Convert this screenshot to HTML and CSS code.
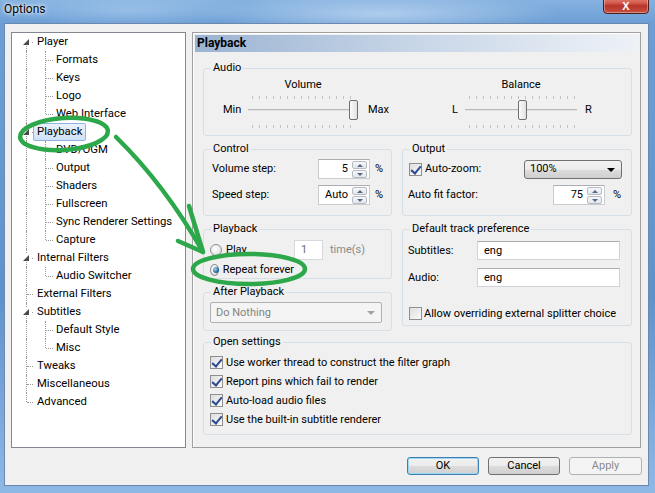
FILE: index.html
```html
<!DOCTYPE html>
<html lang="en">
<head>
    <meta charset="UTF-8">
    <title>Options</title>
    <link rel="stylesheet" href="styles.css">
</head>
<body>
<div class="window">
    <div class="titlebar">
        <span class="title">Options</span>
        <span class="close">X</span>
    </div>

    <div class="client">
        <div class="main">
            <!-- page tree -->
            <div class="tree">
                <div class="node"><i class="l0 first"></i><span class="exp"></span><span class="txt">Player</span></div>
                <div class="node"><i class="l0 pass"></i><i class="l1"></i><span class="txt">Formats</span></div>
                <div class="node"><i class="l0 pass"></i><i class="l1"></i><span class="txt">Keys</span></div>
                <div class="node"><i class="l0 pass"></i><i class="l1"></i><span class="txt">Logo</span></div>
                <div class="node"><i class="l0 pass"></i><i class="l1 last"></i><span class="txt">Web Interface</span></div>
                <div class="node"><i class="l0"></i><span class="exp"></span><span class="txt sel">Playback</span></div>
                <div class="node"><i class="l0 pass"></i><i class="l1"></i><span class="txt">DVD/OGM</span></div>
                <div class="node"><i class="l0 pass"></i><i class="l1"></i><span class="txt">Output</span></div>
                <div class="node"><i class="l0 pass"></i><i class="l1"></i><span class="txt">Shaders</span></div>
                <div class="node"><i class="l0 pass"></i><i class="l1"></i><span class="txt">Fullscreen</span></div>
                <div class="node"><i class="l0 pass"></i><i class="l1"></i><span class="txt">Sync Renderer Settings</span></div>
                <div class="node"><i class="l0 pass"></i><i class="l1 last"></i><span class="txt">Capture</span></div>
                <div class="node"><i class="l0"></i><span class="exp"></span><span class="txt">Internal Filters</span></div>
                <div class="node"><i class="l0 pass"></i><i class="l1 last"></i><span class="txt">Audio Switcher</span></div>
                <div class="node"><i class="l0"></i><span class="txt">External Filters</span></div>
                <div class="node"><i class="l0"></i><span class="exp"></span><span class="txt">Subtitles</span></div>
                <div class="node"><i class="l0 pass"></i><i class="l1"></i><span class="txt">Default Style</span></div>
                <div class="node"><i class="l0 pass"></i><i class="l1 last"></i><span class="txt">Misc</span></div>
                <div class="node"><i class="l0"></i><span class="txt">Tweaks</span></div>
                <div class="node"><i class="l0"></i><span class="txt">Miscellaneous</span></div>
                <div class="node"><i class="l0 last"></i><span class="txt">Advanced</span></div>
            </div>

            <!-- property page -->
            <div class="panel">
                <div class="panel-head">Playback</div>
                <div class="page">
                    <div class="group audio">
                        <span class="gtitle">Audio</span>
                        <div class="slider vol">
                            <span class="stitle">Volume</span>
                            <span class="smin">Min</span>
                            <div class="track"><span class="thumb" style="left:101px"></span></div>
                            <span class="smax">Max</span>
                        </div>
                        <div class="slider bal">
                            <span class="stitle">Balance</span>
                            <span class="smin">L</span>
                            <div class="track"><span class="thumb" style="left:53px"></span></div>
                            <span class="smax">R</span>
                        </div>
                    </div>

                    <div class="cols">
                        <div class="group control">
                            <span class="gtitle">Control</span>
                            <div class="field">
                                <span class="lbl">Volume step:</span>
                                <span class="spin"><span class="val">5</span><span class="arrows"><b class="up"></b><b class="dn"></b></span></span>
                                <span class="unit">%</span>
                            </div>
                            <div class="field">
                                <span class="lbl">Speed step:</span>
                                <span class="spin"><span class="val">Auto</span><span class="arrows"><b class="up"></b><b class="dn"></b></span></span>
                                <span class="unit">%</span>
                            </div>
                        </div>
                        <div class="group output">
                            <span class="gtitle">Output</span>
                            <div class="field">
                                <span class="lbl check"><span class="cb on"></span>Auto-zoom:</span>
                                <span class="combo">100%<i class="arrow"></i></span>
                            </div>
                            <div class="field">
                                <span class="lbl wide">Auto fit factor:</span>
                                <span class="spin"><span class="val">75</span><span class="arrows"><b class="up"></b><b class="dn"></b></span></span>
                                <span class="unit far">%</span>
                            </div>
                        </div>
                    </div>

                    <div class="cols">
                        <div class="stack">
                            <div class="group repeat">
                                <span class="gtitle">Playback</span>
                                <div class="field">
                                    <span class="opt"><span class="radio"></span>Play</span>
                                    <span class="edit small dim">1</span>
                                    <span class="dim times">time(s)</span>
                                </div>
                                <div class="field short">
                                    <span class="opt"><span class="radio on"></span>Repeat forever</span>
                                </div>
                            </div>
                            <div class="group after">
                                <span class="gtitle">After Playback</span>
                                <span class="combo off">Do Nothing<i class="arrow"></i></span>
                            </div>
                        </div>
                        <div class="group tracks">
                            <span class="gtitle">Default track preference</span>
                            <div class="field">
                                <span class="lbl">Subtitles:</span>
                                <span class="edit">eng</span>
                            </div>
                            <div class="field gap">
                                <span class="lbl">Audio:</span>
                                <span class="edit">eng</span>
                            </div>
                            <div class="field split">
                                <span class="cb"></span>Allow overriding external splitter choice
                            </div>
                        </div>
                    </div>

                    <div class="group open">
                        <span class="gtitle">Open settings</span>
                        <div class="line"><span class="cb on"></span>Use worker thread to construct the filter graph</div>
                        <div class="line"><span class="cb on"></span>Report pins which fail to render</div>
                        <div class="line"><span class="cb on"></span>Auto-load audio files</div>
                        <div class="line"><span class="cb on"></span>Use the built-in subtitle renderer</div>
                    </div>
                </div>
            </div>
        </div>

        <div class="buttons">
            <button class="btn default">OK</button>
            <button class="btn">Cancel</button>
            <button class="btn disabled">Apply</button>
        </div>
    </div>

    <!-- hand drawn marks on top of the screenshot -->
    <svg class="marks" width="655" height="493" viewBox="0 0 655 493">
        <g fill="none" stroke="#2ca84a" stroke-width="4.5" stroke-linecap="round" stroke-linejoin="round">
            <ellipse cx="64" cy="134" rx="44" ry="16" transform="rotate(-4 64 134)"/>
            <ellipse cx="249" cy="269" rx="56" ry="15"/>
            <path d="M116 137 Q165 185 203 252"/>
            <path d="M189 206 L203 252 L178 241"/>
        </g>
    </svg>
</div>
</body>
</html>
```

FILE: styles.css
```css
*{box-sizing:border-box;margin:0;padding:0}
body{font-family:Roboto,"Segoe UI","Liberation Sans",sans-serif;font-size:11px;line-height:14px;color:#000;background:#6d9dd3}
.window{position:relative;width:655px;height:493px;overflow:hidden;background:radial-gradient(ellipse 180px 20px at 380px 14px,rgba(200,222,245,0.7),transparent),radial-gradient(ellipse 120px 18px at 130px 10px,rgba(170,203,238,0.6),transparent),linear-gradient(to bottom,#86b2e0 0,#6d9fd6 22px,#5f92cd 60%,#8fb8e6 100%)}
.titlebar{height:23px;display:flex;align-items:flex-start}
.title{padding-left:4px;line-height:18px;font-size:12px;text-shadow:0 0 6px #fff,0 0 3px #fff}
.close{margin-left:auto;margin-right:6px;margin-top:-6px;width:46px;height:20px;padding-top:6px;border:1px solid #4b1d1d;border-radius:0 0 4px 4px;background:linear-gradient(to bottom,#e8a092 0,#d2594a 45%,#b8342a 60%,#c8523f 100%);color:#fff;font:bold 11px/10px "Liberation Sans",sans-serif;text-align:center;box-shadow:inset 0 0 0 1px rgba(255,255,255,0.35)}
.client{margin-left:4px;width:645px;height:463px;background:#f0f0f0;border:1px solid #6b88ae}
.main{display:flex;gap:6px;padding:8px 0 0 6px;height:424px}
.tree{width:175px;height:416px;background:#fff;border:1px solid #828790}
.node{position:relative;height:18px;display:flex;align-items:center}
.l0,.l1{position:relative;flex:none;height:18px}
.l0{width:21px}
.l1{width:19px}
.l0::before,.l1::before{content:"";position:absolute;top:0;bottom:0;border-left:1px dotted #9a9a9a}
.l0::before{left:14px}
.l1::before{left:12px}
.l0::after,.l1::after{content:"";position:absolute;top:9px;right:0;border-top:1px dotted #9a9a9a}
.l0::after{left:15px}
.l1::after{left:13px;right:-1px}
.l0.pass::after{display:none}
.first::before{top:9px}
.last::before{bottom:9px}
.exp{position:absolute;left:10px;top:5px;width:9px;height:8px;background:#fff}
.exp::after{content:"";position:absolute;left:1px;top:1px;border-left:6px solid transparent;border-bottom:6px solid #4a4a4a}
.txt{padding:0 3px;line-height:16px;border:1px solid transparent;white-space:nowrap;font-size:11.3px}
.txt.sel{background:linear-gradient(to bottom,#eaf2fc,#cfe1f8);border-color:#8fb3e0;border-radius:2px}
.panel{width:449px;height:416px;border:1px solid #a0a0a0;box-shadow:inset 1px 1px 0 #fff}
.panel-head{margin:2px 2px 0 2px;height:17px;padding-left:2px;line-height:17px;font-weight:bold;font-size:12px;background:linear-gradient(to right,#9bb3d2 0,#c4d3e6 45%,#eef2f7 100%)}
.page{display:flex;flex-direction:column;gap:13px;padding:16px 8px 0 10px}
.group{position:relative;border:1px solid #d5dfe5;border-radius:3px}
.gtitle{position:absolute;top:-8px;left:7px;padding:0 2px;background:#f0f0f0;line-height:14px;white-space:nowrap}
.audio{height:68px;display:flex;padding:9px 0 0 19px}
.slider{display:grid;grid-template-rows:14px 36px}
.vol{grid-template-columns:25px 110px 40px}
.bal{grid-template-columns:13px 112px 30px;margin-left:54px}
.stitle{grid-column:2;grid-row:1;text-align:center}
.smin{grid-column:1;grid-row:2;align-self:center}
.track{grid-column:2;grid-row:2}
.smax{grid-column:3;grid-row:2;align-self:center}
.vol .smax{padding-left:10px}
.bal .smax{padding-left:8px}
.track{position:relative;height:36px;background:linear-gradient(#b9b9b9,#b9b9b9) 0 17px/100% 1px no-repeat,linear-gradient(#e4e4e4,#e4e4e4) 0 18px/100% 1px no-repeat}
.track::before,.track::after{content:"";position:absolute;left:4px;right:2px;height:3px;background:repeating-linear-gradient(to right,#c2c2c2 0 1px,transparent 1px 7px)}
.track::before{top:4px}
.track::after{top:33px}
.thumb{position:absolute;top:8px;width:9px;height:20px;border:1px solid #6f6f6f;border-radius:2px;background:linear-gradient(to right,#fbfbfb,#e2e2e2)}
.cols{display:grid;grid-template-columns:189px 230px;column-gap:10px;align-items:start}
.stack{display:flex;flex-direction:column;gap:13px}
.control,.output{height:67px;padding-top:9px}
.control{padding-left:8px}
.output{padding-left:5px}
.field{display:flex;align-items:center;height:20px;white-space:nowrap}
.field+.field{margin-top:6px}
.lbl{width:106px;flex:none}
.lbl.check{width:116px;display:flex;align-items:center}
.lbl.wide{width:145px}
.spin{width:52px;height:20px;display:flex;align-items:center;background:#fff;border:1px solid #c9ccd1;border-top-color:#abadb3}
.val{flex:1;text-align:right;padding-right:4px}
.arrows{width:15px;display:flex;flex-direction:column;gap:1px;margin-right:2px}
.arrows b{height:8px;border:1px solid #b7bcc4;border-radius:2px;background:linear-gradient(#f7f7f7,#e3e6ea);position:relative}
.arrows b::after{content:"";position:absolute;left:4px;top:2px;border-left:3px solid transparent;border-right:3px solid transparent}
.arrows .up::after{border-bottom:3px solid #55698c}
.arrows .dn::after{border-top:3px solid #55698c}
.unit{margin-left:5px}
.unit.far{margin-left:8px}
.cb{display:inline-block;flex:none;width:13px;height:13px;margin:0 3px 0 1px;border:1px solid #8e8f8f;background:linear-gradient(135deg,#dedede,#fafafa);position:relative}
.cb.on::after{content:"";position:absolute;left:3px;top:0;width:4px;height:8px;border:solid #2b4a8f;border-width:0 2px 2px 0;transform:rotate(40deg)}
.combo{width:98px;height:19px;display:flex;align-items:center;padding-left:5px;position:relative;border:1px solid #707070;border-radius:3px;background:linear-gradient(to bottom,#f2f2f2 0,#ebebeb 50%,#dddddd 51%,#cfcfcf 100%)}
.combo .arrow{position:absolute;right:6px;top:7px;border-left:4px solid transparent;border-right:4px solid transparent;border-top:4px solid #000}
.combo.off{width:172px;height:21px;margin:9px 0 0 6px;border-color:#adb2b5;background:#f4f4f4;color:#838383;border-radius:2px}
.combo.off .arrow{top:8px;border-top-color:#a2a2a2}
.repeat{height:50px;padding:10px 0 0 6px}
.field.short{height:16px;margin-top:2px}
.opt{width:84px;flex:none;display:flex;align-items:center}
.radio{width:12px;height:12px;margin-right:4px;border:1px solid #8e8f8f;border-radius:50%;background:radial-gradient(circle at 40% 40%,#fff,#d8d8d8);position:relative}
.radio.on::after{content:"";position:absolute;left:2px;top:2px;width:6px;height:6px;border-radius:50%;background:radial-gradient(circle at 35% 35%,#9fd3f5,#1b5d95 70%)}
.edit{display:flex;align-items:center;height:19px;width:143px;padding-left:6px;background:#fff;border:1px solid #d0d3d8;border-top-color:#abadb3}
.edit.small{width:29px;height:20px;border-color:#d7d9dc}
.dim{color:#8a8a8a}
.edit.dim{color:#6d6d6d}
.times{margin-left:7px}
.after{height:39px}
.tracks{height:97px;padding:11px 0 0 5px}
.tracks .lbl{width:69px}
.tracks .field{height:19px}
.field.gap{margin-top:8px}
.field.split{margin-top:20px;height:13px}
.field.split .cb{margin-right:2px}
.open{height:93px;padding:10px 0 0 5px;margin-top:-2px}
.line{height:19px;display:flex;align-items:center;white-space:nowrap}
.buttons{display:flex;justify-content:flex-end;gap:9px;padding:9px 6px 0 0}
.btn{width:72px;height:18px;font:inherit;color:#000;border:1px solid #707070;border-radius:3px;background:linear-gradient(to bottom,#f2f2f2 0,#ebebeb 50%,#dddddd 51%,#cfcfcf 100%)}
.btn.default{border-color:#3c7fb1;box-shadow:inset 0 0 0 1px #9ed6f4}
.btn.disabled{width:73px;color:#8a8a8a;border-color:#adb2b5;background:#f4f4f4}
.marks{position:absolute;left:0;top:0;pointer-events:none}
```
